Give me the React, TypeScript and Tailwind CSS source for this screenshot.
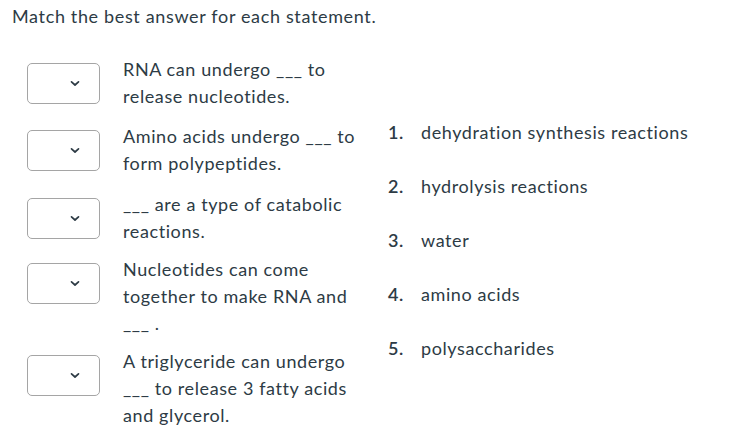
import React from "react";

const statements: { lines: string[]; gap: string }[] = [
  { lines: ["RNA can undergo ___ to", "release nucleotides."], gap: "" },
  { lines: ["Amino acids undergo ___ to", "form polypeptides."], gap: "mt-[13px]" },
  { lines: ["___ are a type of catabolic", "reactions."], gap: "mt-[14px]" },
  { lines: ["Nucleotides can come", "together to make RNA and", "___ ."], gap: "mt-[11px]" },
  { lines: ["A triglyceride can undergo", "___ to release 3 fatty acids", "and glycerol."], gap: "mt-[11px]" },
];

const answers = [
  "dehydration synthesis reactions",
  "hydrolysis reactions",
  "water",
  "amino acids",
  "polysaccharides",
];

function SelectBox() {
  return (
    <div className="mt-[7px] flex h-[41px] w-[73px] shrink-0 items-center justify-end rounded-[5px] border border-[#a5a5a5] bg-white pr-[19px]">
      <svg width="10" height="7" viewBox="0 0 10 7" fill="none">
        <path d="M1.5 1.8 L5 5 L8.5 1.8" stroke="#2d3b45" strokeWidth="1.7" strokeLinecap="round" strokeLinejoin="round" />
      </svg>
    </div>
  );
}

export default function App() {
  return (
    <div
      className="h-[438px] w-[729px] bg-white text-[#2d3b45] tracking-[0.6px]"
      style={{ fontFamily: "Lato, 'Open Sans', sans-serif" }}
    >
      <div className="whitespace-nowrap pl-[12px] pt-[3px] text-[18px] leading-[26px] tracking-[0.65px]">
        Match the best answer for each statement.
      </div>
      <div className="flex pt-[27px]">
        <div className="flex w-[388px] shrink-0 flex-col pl-[27px]">
          {statements.map((s, i) => (
            <div key={i} className={`flex ${s.gap}`}>
              <SelectBox />
              <div className="ml-[23px] whitespace-nowrap text-[18px] leading-[27px]">
                {s.lines.map((l, j) => (
                  <div key={j}>{l}</div>
                ))}
              </div>
            </div>
          ))}
        </div>
        <div className="flex flex-col gap-[27px] pt-[63px] text-[18px] leading-[27px]">
          {answers.map((a, i) => (
            <div key={i} className="flex whitespace-nowrap">
              <span className="w-[33px] font-semibold">{i + 1}.</span>
              <span>{a}</span>
            </div>
          ))}
        </div>
      </div>
    </div>
  );
}
